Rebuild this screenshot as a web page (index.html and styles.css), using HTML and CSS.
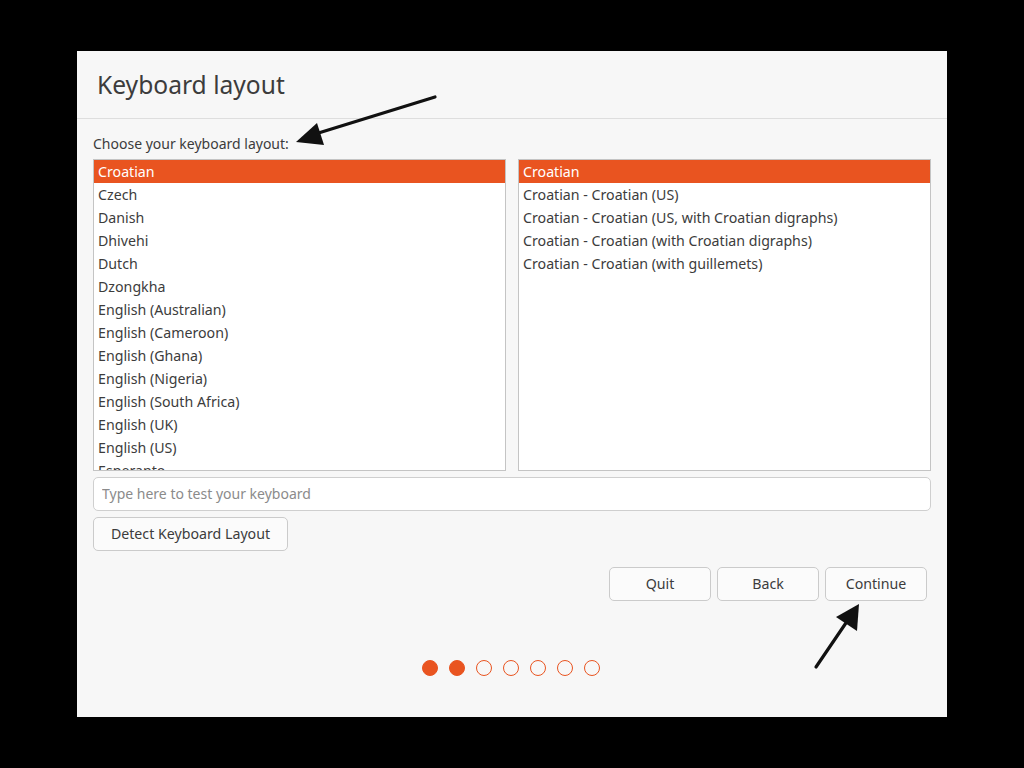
FILE: index.html
```html
<!DOCTYPE html>
<html>
<head>
<meta charset="utf-8">
<link rel="stylesheet" href="styles.css">
</head>
<body>
<div class="window">
  <div class="header"><h1 class="title">Keyboard layout</h1></div>
  <div class="content">
    <div class="label">Choose your keyboard layout:</div>
    <div class="lists">
      <div class="list">
        <div class="row selected">Croatian</div>
        <div class="row">Czech</div>
        <div class="row">Danish</div>
        <div class="row">Dhivehi</div>
        <div class="row">Dutch</div>
        <div class="row">Dzongkha</div>
        <div class="row">English (Australian)</div>
        <div class="row">English (Cameroon)</div>
        <div class="row">English (Ghana)</div>
        <div class="row">English (Nigeria)</div>
        <div class="row">English (South Africa)</div>
        <div class="row">English (UK)</div>
        <div class="row">English (US)</div>
        <div class="row">Esperanto</div>
      </div>
      <div class="list">
        <div class="row selected">Croatian</div>
        <div class="row">Croatian - Croatian (US)</div>
        <div class="row">Croatian - Croatian (US, with Croatian digraphs)</div>
        <div class="row">Croatian - Croatian (with Croatian digraphs)</div>
        <div class="row">Croatian - Croatian (with guillemets)</div>
      </div>
    </div>
    <input class="test" type="text" placeholder="Type here to test your keyboard">
    <div class="detect-row"><button class="btn detect">Detect Keyboard Layout</button></div>
    <div class="nav">
      <button class="btn nav-btn">Quit</button>
      <button class="btn nav-btn">Back</button>
      <button class="btn nav-btn">Continue</button>
    </div>
    <div class="dots">
      <span class="dot on"></span><span class="dot on"></span><span class="dot"></span><span class="dot"></span><span class="dot"></span><span class="dot"></span><span class="dot"></span>
    </div>
  </div>
</div>
<svg class="arrows" width="1024" height="768" viewBox="0 0 1024 768">
  <line x1="435" y1="97" x2="312" y2="135" stroke="#111" stroke-width="3.2" stroke-linecap="round"/>
  <polygon points="296,142 317,123 324,145" fill="#111"/>
  <line x1="816" y1="667" x2="850" y2="617" stroke="#111" stroke-width="3.2" stroke-linecap="round"/>
  <polygon points="859,604 857,631 836,617" fill="#111"/>
</svg>
</body>
</html>
```
FILE: styles.css
```css
html, body {
  margin: 0;
  padding: 0;
}
body {
  background: #000;
  width: 1024px;
  height: 768px;
  display: flex;
  align-items: center;
  justify-content: center;
  font-family: "Noto Sans", "DejaVu Sans", sans-serif;
  color: #3c3c3c;
  position: relative;
  overflow: hidden;
}
.window {
  width: 870px;
  height: 666px;
  background: #f7f7f7;
  display: flex;
  flex-direction: column;
}
.header {
  height: 68px;
  border-bottom: 1px solid #dedede;
  box-sizing: border-box;
  padding-left: 20px;
  display: flex;
  align-items: center;
}
.title {
  margin: 0;
  font-weight: 400;
  font-size: 24.6px;
  line-height: 30px;
  padding-top: 1px;
  color: #3c3c3c;
}
.content {
  padding: 15px 16px 0 16px;
  display: flex;
  flex-direction: column;
}
.label {
  font-size: 14px;
  line-height: 20px;
  height: 20px;
  margin-bottom: 5px;
  padding-top: 0;
}
.lists {
  display: flex;
  gap: 12px;
  height: 312px;
}
.list {
  flex: 1;
  border: 1px solid #c4c4c4;
  background: #fff;
  overflow: hidden;
  box-sizing: border-box;
}
.row {
  height: 23px;
  line-height: 23px;
  padding-left: 4px;
  font-size: 14.2px;
  white-space: nowrap;
}
.row.selected {
  background: #e95420;
  color: #fff;
}
.test {
  margin-top: 6px;
  height: 34px;
  box-sizing: border-box;
  border: 1px solid #cfcfcf;
  border-radius: 5px;
  background: #fff;
  padding: 0 8px 2px 8px;
  font-family: inherit;
  font-size: 14px;
  color: #3c3c3c;
  outline: none;
}
.test::placeholder {
  color: #8b8b8b;
}
.detect-row {
  margin-top: 6px;
  display: flex;
}
.btn {
  height: 34px;
  box-sizing: border-box;
  border: 1px solid #cbcbcb;
  border-radius: 5px;
  background: #fbfbfb;
  font-family: inherit;
  font-size: 14.2px;
  color: #3c3c3c;
  padding: 0 0 2px 0;
}
.detect {
  width: 195px;
}
.nav {
  margin-top: 16px;
  display: flex;
  justify-content: flex-end;
  gap: 6px;
  padding-right: 4px;
}
.nav-btn {
  width: 102px;
}
.dots {
  margin-top: 59px;
  display: flex;
  justify-content: center;
  gap: 11px;
  margin-left: -2px;
}
.dot {
  width: 16px;
  height: 16px;
  box-sizing: border-box;
  border-radius: 50%;
  border: 1px solid #e95420;
  background: transparent;
}
.dot.on {
  background: #e95420;
}
.arrows {
  position: absolute;
  left: 0;
  top: 0;
  pointer-events: none;
}
```
